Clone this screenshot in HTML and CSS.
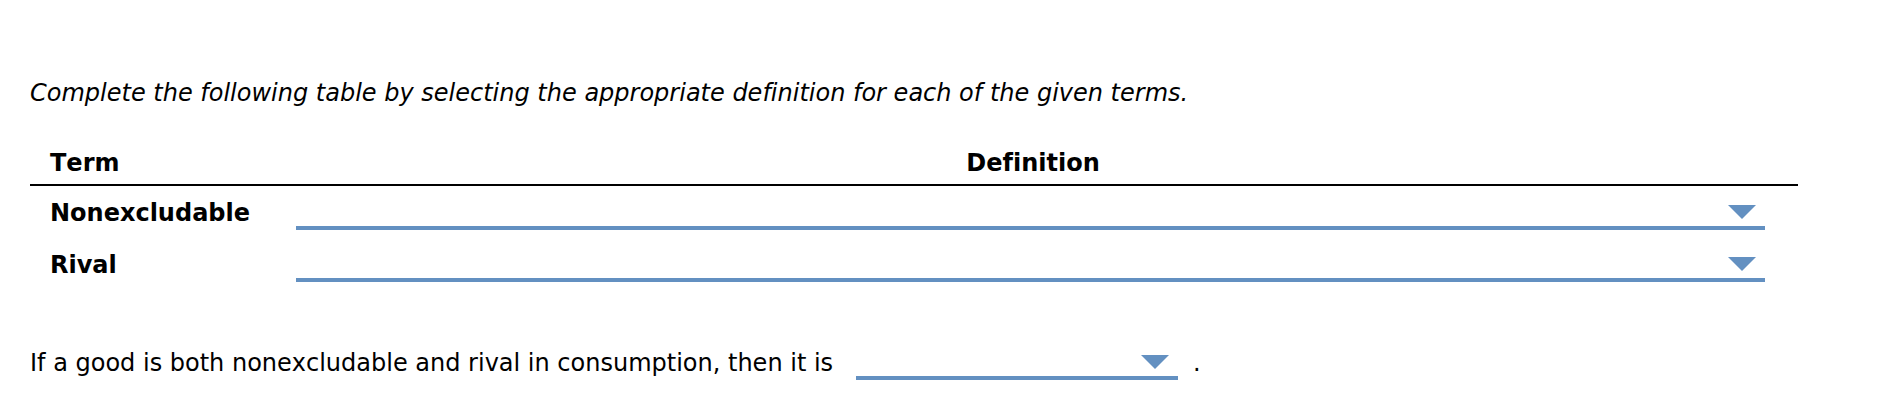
FILE: index.html
```html
<!DOCTYPE html>
<html lang="en">
<head>
    <meta charset="UTF-8">
    <meta name="viewport" content="width=device-width, initial-scale=1.0">
    <title>Terms and Definitions</title>
    <link rel="stylesheet" href="styles.css">
</head>
<body>
    <form class="question">
        <p class="instructions">Complete the following table by selecting the appropriate definition for each of the given terms.</p>

        <table class="terms">
            <thead>
                <tr>
                    <th class="term" scope="col">Term</th>
                    <th class="definition" scope="col">Definition</th>
                </tr>
            </thead>
            <tbody>
                <tr>
                    <th class="term" scope="row"><label for="slcNonexcludable">Nonexcludable</label></th>
                    <td class="definition">
                        <select class="dropdown" id="slcNonexcludable" name="slcNonexcludable">
                            <option value=""></option>
                        </select>
                    </td>
                </tr>
                <tr>
                    <th class="term" scope="row"><label for="slcRival">Rival</label></th>
                    <td class="definition">
                        <select class="dropdown" id="slcRival" name="slcRival">
                            <option value=""></option>
                        </select>
                    </td>
                </tr>
            </tbody>
        </table>

        <div class="sentence">
            <label for="slcGood">If a good is both nonexcludable and rival in consumption, then it is</label>
            <select class="dropdown dropdown-short" id="slcGood" name="slcGood">
                <option value=""></option>
            </select>
            <span>.</span>
        </div>
    </form>
</body>
</html>
```
FILE: styles.css
```css
body {
    margin: 0;
    background-color: #fff;
    color: #000;
    font-family: Verdana, "DejaVu Sans", sans-serif;
    font-size: 24px;
    line-height: 34px;
    font-kerning: none;
    font-variant-ligatures: none;
}
.question {
    padding: 76px 82px 0 30px;
}
.instructions {
    margin: 0 0 36px;
    font-style: italic;
}
.terms {
    width: 100%;
    border-spacing: 0;
}
.terms th,
.terms td {
    padding: 10px 0 8px;
}
.terms thead th {
    padding: 0 0 4px;
    border-bottom: 2px solid #000;
}
.terms .term {
    width: 218px;
    padding-left: 20px;
    text-align: left;
}
.terms tbody .definition {
    padding-left: 28px;
    padding-right: 33px;
}
.dropdown {
    display: block;
    box-sizing: border-box;
    width: 100%;
    height: 34px;
    padding: 0 44px 0 8px;
    border: none;
    border-bottom: 4px solid #6390c1;
    border-radius: 0;
    /* down arrow */
    background: url("data:image/svg+xml,%3Csvg xmlns='http://www.w3.org/2000/svg' width='28' height='14' viewBox='0 0 28 14'%3E%3Cpath d='M0 0h28L14 14z' fill='%236390c1'/%3E%3C/svg%3E") no-repeat right 9px bottom 7px;
    color: inherit;
    font: inherit;
    appearance: none;
    cursor: pointer;
}
.dropdown-short {
    width: 322px;
}
.sentence {
    display: flex;
    align-items: center;
    gap: 15px;
    margin-top: 56px;
}
.sentence label {
    padding-right: 8px;
}
```
